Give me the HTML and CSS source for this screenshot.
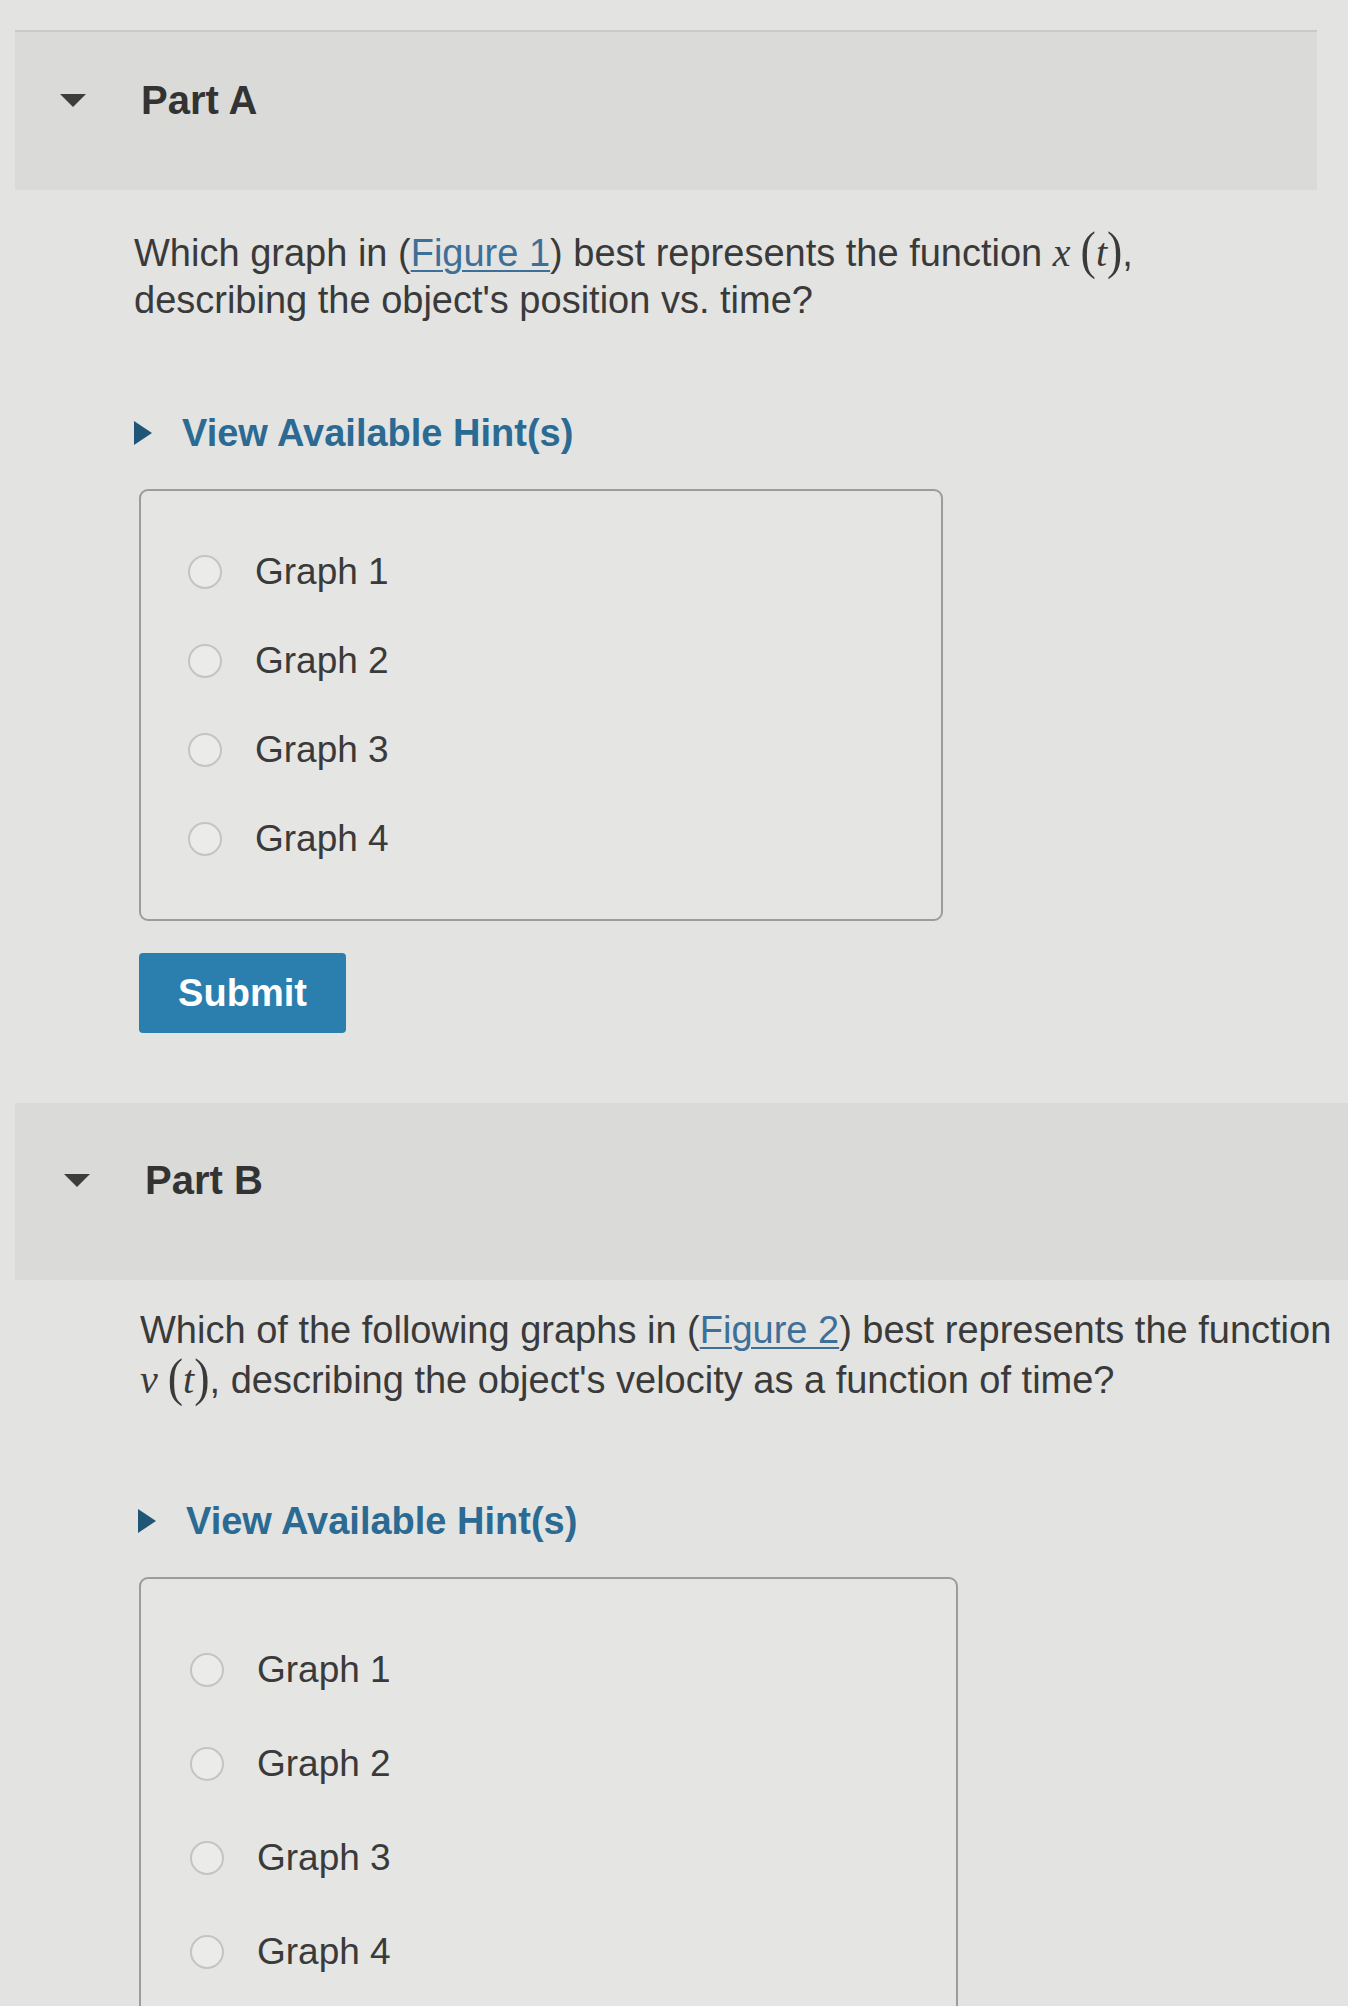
FILE: index.html
```html
<!DOCTYPE html>
<html lang="en">
<head>
<meta charset="utf-8">
<title>Part A / Part B</title>
<link rel="stylesheet" href="styles.css">
</head>
<body>
<div class="page">
  <section class="part part-a">
    <div class="part-header">
      <span class="caret-down"></span>
      <h2 class="part-title">Part A</h2>
    </div>
    <div class="part-body">
      <p class="question">Which graph in (<a class="fig-link" href="#">Figure 1</a>) best represents the function <span class="math"><i>x</i>&nbsp;<span class="paren">(</span><i>t</i><span class="paren">)</span></span>,<br>describing the object's position vs. time?</p>
      <div class="hint"><span class="caret-right"></span><span class="hint-text">View Available Hint(s)</span></div>
      <div class="choices">
        <label class="choice"><span class="radio"></span><span class="choice-label">Graph 1</span></label>
        <label class="choice"><span class="radio"></span><span class="choice-label">Graph 2</span></label>
        <label class="choice"><span class="radio"></span><span class="choice-label">Graph 3</span></label>
        <label class="choice"><span class="radio"></span><span class="choice-label">Graph 4</span></label>
      </div>
      <button class="submit" type="button">Submit</button>
    </div>
  </section>

  <section class="part part-b">
    <div class="part-header">
      <span class="caret-down"></span>
      <h2 class="part-title">Part B</h2>
    </div>
    <div class="part-body">
      <p class="question">Which of the following graphs in (<a class="fig-link" href="#">Figure 2</a>) best represents the function<br><span class="math"><i>v</i>&nbsp;<span class="paren">(</span><i>t</i><span class="paren">)</span></span>, describing the object's velocity as a function of time?</p>
      <div class="hint"><span class="caret-right"></span><span class="hint-text">View Available Hint(s)</span></div>
      <div class="choices">
        <label class="choice"><span class="radio"></span><span class="choice-label">Graph 1</span></label>
        <label class="choice"><span class="radio"></span><span class="choice-label">Graph 2</span></label>
        <label class="choice"><span class="radio"></span><span class="choice-label">Graph 3</span></label>
        <label class="choice"><span class="radio"></span><span class="choice-label">Graph 4</span></label>
      </div>
    </div>
  </section>
</div>
</body>
</html>
```

FILE: styles.css
```css
* { box-sizing: border-box; }

html, body {
  margin: 0;
  padding: 0;
  background: #e3e3e1;
}

body {
  font-family: "Liberation Sans", Arial, Helvetica, sans-serif;
  color: #3a3a3a;
  height: 2006px;
  overflow: hidden;
}

.page {
  padding-top: 30px;
}

/* ---------- part header band ---------- */
.part-header {
  display: flex;
  align-items: flex-start;
  margin-left: 15px;
  margin-right: 31px;
  background: #dadad8;
}

.part-a .part-header {
  border-top: 2px solid #c9c9c7;
  height: 160px;
  padding: 46px 0 0 45px;
}

.part-b .part-header {
  height: 177px;
  margin-top: 70px;
  margin-right: 0;
  padding: 55px 0 0 49px;
}

.caret-down {
  width: 0;
  height: 0;
  border-left: 13px solid transparent;
  border-right: 13px solid transparent;
  border-top: 13px solid #3c3c3c;
  margin-top: 16px;
  flex: none;
}

.part-title {
  margin: 0 0 0 55px;
  font-size: 40px;
  line-height: 44px;
  font-weight: bold;
  color: #333;
}

/* ---------- body ---------- */
.part-a .part-body { padding-left: 134px; }
.part-b .part-body { padding-left: 140px; }

.question {
  margin: 0;
  font-size: 38px;
  line-height: 47px;
  color: #3a3a3a;
  white-space: nowrap;
}

.part-a .question { margin-top: 37px; }
.part-b .question { margin-top: 27px; }

.fig-link {
  color: #3d6f99;
  text-decoration: underline;
  text-decoration-thickness: 2px;
  text-underline-offset: 4px;
}

.math {
  font-family: "Liberation Serif", "Times New Roman", serif;
  font-size: 40px;
}

.math i { font-style: italic; }

.paren {
  font-size: 46px;
  display: inline-block;
  transform: scaleY(1.15);
}

.hint {
  display: flex;
  align-items: center;
  height: 46px;
}

.part-a .hint { margin-top: 86px; }
.part-b .hint { margin-top: 94px; margin-left: -2px; }

.caret-right {
  width: 0;
  height: 0;
  border-top: 12px solid transparent;
  border-bottom: 12px solid transparent;
  border-left: 18px solid #1f5677;
  flex: none;
}

.hint-text {
  margin-left: 30px;
  font-size: 38px;
  font-weight: bold;
  color: #2a6a93;
}

/* ---------- choices ---------- */
.choices {
  margin-top: 33px;
  margin-left: 5px;
  border: 2px solid #9c9c9a;
  border-radius: 9px;
  background: #e5e5e3;
  display: flex;
  flex-direction: column;
}

.part-a .choices {
  width: 804px;
  padding: 36px 0 36px 47px;
}

.part-b .choices {
  width: 819px;
  margin-left: -1px;
  padding: 44px 0 40px 49px;
}

.choice {
  display: flex;
  align-items: center;
  height: 89px;
}

.part-b .choice { height: 94px; }

.radio {
  width: 34px;
  height: 34px;
  border-radius: 50%;
  border: 2px solid #c4c4c2;
  background: #ebebe9;
  flex: none;
}

.choice-label {
  margin-left: 33px;
  font-size: 37px;
  color: #3a3a3a;
}

.submit {
  margin-top: 32px;
  margin-left: 5px;
  width: 207px;
  height: 80px;
  border: none;
  border-radius: 4px;
  background: #2a7fae;
  color: #ffffff;
  font-family: "Liberation Sans", Arial, Helvetica, sans-serif;
  font-size: 38px;
  font-weight: bold;
  padding: 0;
  display: block;
}
```
